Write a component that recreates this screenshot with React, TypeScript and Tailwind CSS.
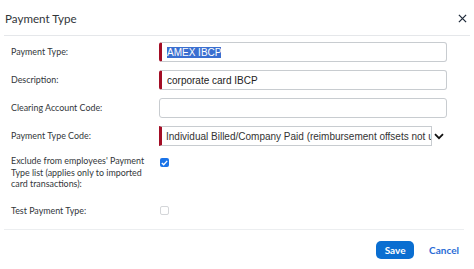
import React from 'react';

const labelCls = 'w-[148px] shrink-0 whitespace-nowrap text-[8.9px] leading-[11.5px] text-[#32363a]';
const inputBase =
  'h-[20px] w-[288px] border border-[#c8ccd0] rounded-[3px] bg-white px-[5px] text-[10px] text-[#222] flex items-center';
const arial = { fontFamily: 'Arial, "Liberation Sans", sans-serif' };

const Required: React.FC<{ children?: React.ReactNode; focused?: boolean }> = ({ children, focused }) => (
  <div
    className={`${inputBase} border-l-[3px] ${focused ? 'border-[#8fa2c4] border-l-[#a30d25]' : 'border-l-[#a30d25]'}`}
    style={arial}
  >
    {children}
  </div>
);

export default function App() {
  return (
    <div
      className="w-[474px] h-[269px] bg-white overflow-hidden relative"
      style={{ fontFamily: 'Lato, "Open Sans", sans-serif' }}
    >
      {/* header */}
      <div className="h-[36px] mx-[4px] border-b border-[#e5e7ea] flex items-center justify-between pl-[1px] pr-[3px]">
        <span className="text-[11.6px] text-[#32363a] mt-[2px]">Payment Type</span>
        <svg width="9" height="9" viewBox="0 0 10 10" className="mt-[1px]">
          <path d="M1 1 L9 9 M9 1 L1 9" stroke="#1f2a3a" strokeWidth="1.4" />
        </svg>
      </div>

      {/* form */}
      <div className="pl-[11px] pt-[6px] flex flex-col gap-[8px]">
        <div className="flex items-center">
          <div className={labelCls}>Payment Type:</div>
          <Required focused>
            <span className="bg-[#3a6fd0] text-white leading-[11px]">AMEX IBCP</span>
          </Required>
        </div>
        <div className="flex items-center">
          <div className={labelCls}>Description:</div>
          <Required>corporate card IBCP</Required>
        </div>
        <div className="flex items-center">
          <div className={labelCls}>Clearing Account Code:</div>
          <div className={inputBase} />
        </div>
        <div className="flex items-center">
          <div className={labelCls}>Payment Type Code:</div>
          <div
            className="h-[20px] w-[273px] border border-[#c8ccd0] border-l-[3px] border-l-[#a30d25] bg-white pl-[4px] text-[10px] text-[#333] flex items-center overflow-hidden whitespace-nowrap"
            style={arial}
          >
            Individual Billed/Company Paid (reimbursement offsets not used)
          </div>
          <svg width="10" height="7" viewBox="0 0 10 7" className="ml-[2px]">
            <path d="M1 1.2 L5 5.2 L9 1.2" stroke="#111" strokeWidth="1.8" fill="none" />
          </svg>
        </div>
        <div className="flex items-start pt-[1px]">
          <div className={labelCls}>
            Exclude from employees' Payment
            <br />
            Type list (applies only to imported
            <br />
            card transactions):
          </div>
          <div className="w-[9px] h-[9px] rounded-[2px] bg-[#1a73e8] mt-[3px] ml-[1px] flex items-center justify-center">
            <svg width="7" height="6" viewBox="0 0 7 6">
              <path d="M0.8 3 L2.7 4.8 L6.2 0.9" stroke="white" strokeWidth="1.3" fill="none" />
            </svg>
          </div>
        </div>
        <div className="flex items-center pt-[7px]">
          <div className={labelCls}>Test Payment Type:</div>
          <div className="w-[9px] h-[9px] rounded-[2px] border border-[#d4d6d9] bg-white ml-[1px]" />
        </div>
      </div>

      {/* footer */}
      <div className="absolute left-[4px] right-[10px] top-[229px] border-t border-[#eceef0]" />
      <div className="absolute top-[241px] right-[15px] flex items-center gap-[15px]">
        <button className="h-[18px] w-[38px] rounded-[5px] bg-[#0a6ed1] text-white text-[10px] font-bold">
          Save
        </button>
        <span className="text-[10px] font-bold text-[#2a6bd6]">Cancel</span>
      </div>
    </div>
  );
}
